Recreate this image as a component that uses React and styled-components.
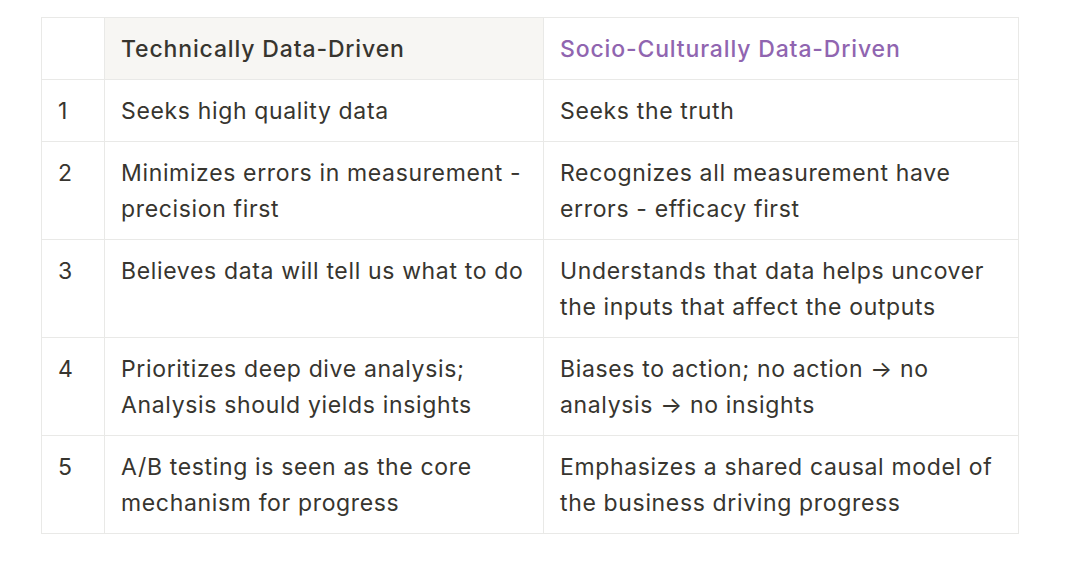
import React from 'react';
import styled, { createGlobalStyle } from 'styled-components';

const GlobalStyle = createGlobalStyle`
  html, body {
    margin: 0;
    padding: 0;
    background: #ffffff;
  }
  body {
    font-family: Inter, "Noto Sans", "Liberation Sans", sans-serif;
    color: #37352f;
    -webkit-font-smoothing: antialiased;
  }
`;

const Page = styled.div`
  padding: 17px 0 0 41px;
`;

const Table = styled.table`
  border-collapse: collapse;
  table-layout: fixed;
  width: 977px;
  font-size: 23px;
  letter-spacing: 0.65px;
  line-height: 36px;
`;

const Cell = styled.td`
  border: 1px solid #e9e9e7;
  padding: 13px 16px 12px;
  vertical-align: top;
  color: #37352f;
`;

const HeadCell = styled(Cell)`
  font-weight: 500;
  letter-spacing: 0.85px;
  background: ${p => (p.$shaded ? '#f7f6f3' : '#ffffff')};
  color: ${p => (p.$accent ? '#9065b0' : '#37352f')};
`;

const columns = [63, 439, 475];

const rows = [
  ['Seeks high quality data', 'Seeks the truth'],
  ['Minimizes errors in measurement - precision first', 'Recognizes all measurement have errors - efficacy first'],
  ['Believes data will tell us what to do', 'Understands that data helps uncover the inputs that affect the outputs'],
  ['Prioritizes deep dive analysis; Analysis should yields insights', 'Biases to action; no action \u2192 no analysis \u2192 no insights'],
  ['A/B testing is seen as the core mechanism for progress', 'Emphasizes a shared causal model of the business driving progress']
];

export default function App() {
  return (
    <Page>
      <GlobalStyle />
      <Table>
        <colgroup>
          {columns.map((w, i) => (
            <col key={i} style={{ width: w }} />
          ))}
        </colgroup>
        <tbody>
          <tr>
            <HeadCell />
            <HeadCell $shaded>Technically Data-Driven</HeadCell>
            <HeadCell $accent>Socio-Culturally Data-Driven</HeadCell>
          </tr>
          {rows.map((r, i) => (
            <tr key={i}>
              <Cell>{i + 1}</Cell>
              <Cell>{r[0]}</Cell>
              <Cell>{r[1]}</Cell>
            </tr>
          ))}
        </tbody>
      </Table>
    </Page>
  );
}
